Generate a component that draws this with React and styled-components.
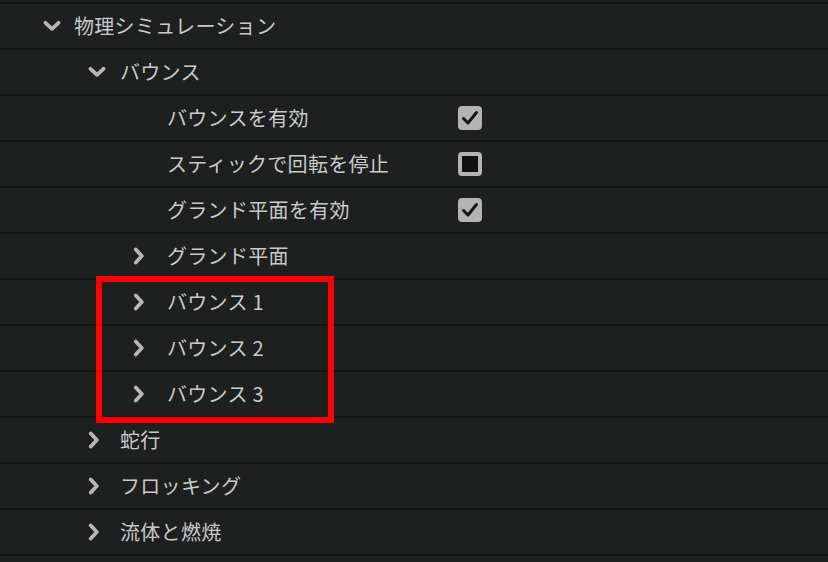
import React from 'react';
import styled, { createGlobalStyle } from 'styled-components';

const GlobalStyle = createGlobalStyle`
    html, body {
        margin: 0;
        padding: 0;
        background-color: #1e1f1f;
    }
    body {
        font-family: "Noto Sans CJK JP", "Noto Sans", sans-serif;
        overflow: hidden;
    }
`;

const Panel = styled.div`
    position: relative;
    width: 828px;
    height: 562px;
    padding-top: 2px;
    box-sizing: border-box;
    overflow: hidden;
    background-color: #1e1f1f;
`;

const Row = styled.div`
    display: grid;
    grid-template-columns: 458px 1fr;
    align-items: center;
    height: 44px;
    border-top: 2px solid #111212;
`;

const Lead = styled.div`
    display: flex;
    align-items: center;
    padding-left: ${props => props.$indent}px;
`;

const IconSlot = styled.span`
    display: flex;
    align-items: center;
    width: ${props => props.$width}px;
    height: 20px;
    flex: none;
`;

const Label = styled.span`
    color: #cacaca;
    font-size: 20px;
    line-height: 24px;
    letter-spacing: 0.3px;
    white-space: nowrap;
`;

const Box = styled.span`
    display: flex;
    align-items: center;
    justify-content: center;
    width: 24px;
    height: 24px;
    box-sizing: border-box;
    border-radius: 4px;
    background-color: ${props => (props.$checked ? '#b3b3b3' : '#111111')};
    border: ${props => (props.$checked ? 'none' : '4px solid #b3b3b3')};
`;

const Highlight = styled.div`
    position: absolute;
    left: 96px;
    top: 276px;
    width: 238px;
    height: 147px;
    box-sizing: border-box;
    border: 6px solid #ff0000;
    pointer-events: none;
`;

const indents = [43, 88, 133];
const textLeft = [74, 120, 167];

const Chevron = ({ open }) =>
    open ? (
        <svg width="18" height="12" viewBox="0 0 18 12">
            <path d="M2.5 2.8 L9 8.8 L15.5 2.8" fill="none" stroke="#b6b6b6" strokeWidth="3.8" strokeLinecap="round" strokeLinejoin="round" />
        </svg>
    ) : (
        <svg width="12" height="18" viewBox="0 0 12 18">
            <path d="M2.8 2.5 L8.8 9 L2.8 15.5" fill="none" stroke="#b6b6b6" strokeWidth="3.8" strokeLinecap="round" strokeLinejoin="round" />
        </svg>
    );

const Check = ({ checked }) => (
    <Box $checked={checked}>
        {checked && (
            <svg width="24" height="24" viewBox="0 0 24 24">
                <path d="M5.5 12.5 L10 17 L18.5 6.5" fill="none" stroke="#161616" strokeWidth="3" strokeLinecap="round" strokeLinejoin="round" />
            </svg>
        )}
    </Box>
);

const items = [
    { level: 0, label: '物理シミュレーション', open: true },
    { level: 1, label: 'バウンス', open: true },
    { level: 2, label: 'バウンスを有効', check: true },
    { level: 2, label: 'スティックで回転を停止', check: false },
    { level: 2, label: 'グランド平面を有効', check: true },
    { level: 2, label: 'グランド平面', open: false },
    { level: 2, label: 'バウンス\u00a01', open: false },
    { level: 2, label: 'バウンス\u00a02', open: false },
    { level: 2, label: 'バウンス\u00a03', open: false },
    { level: 1, label: '蛇行', open: false },
    { level: 1, label: 'フロッキング', open: false },
    { level: 1, label: '流体と燃焼', open: false },
    { level: 1, label: '', empty: true },
];

export default function App() {
    return (
        <Panel>
            <GlobalStyle />
            {items.map((item, i) => {
                const hasToggle = item.check === undefined && !item.empty;
                const indent = indents[item.level];
                return (
                    <Row key={i}>
                        <Lead $indent={hasToggle ? indent : textLeft[item.level]}>
                            {hasToggle && (
                                <IconSlot $width={textLeft[item.level] - indent}>
                                    <Chevron open={item.open} />
                                </IconSlot>
                            )}
                            <Label>{item.label}</Label>
                        </Lead>
                        {item.check !== undefined && <Check checked={item.check} />}
                    </Row>
                );
            })}
            <Highlight />
        </Panel>
    );
}
